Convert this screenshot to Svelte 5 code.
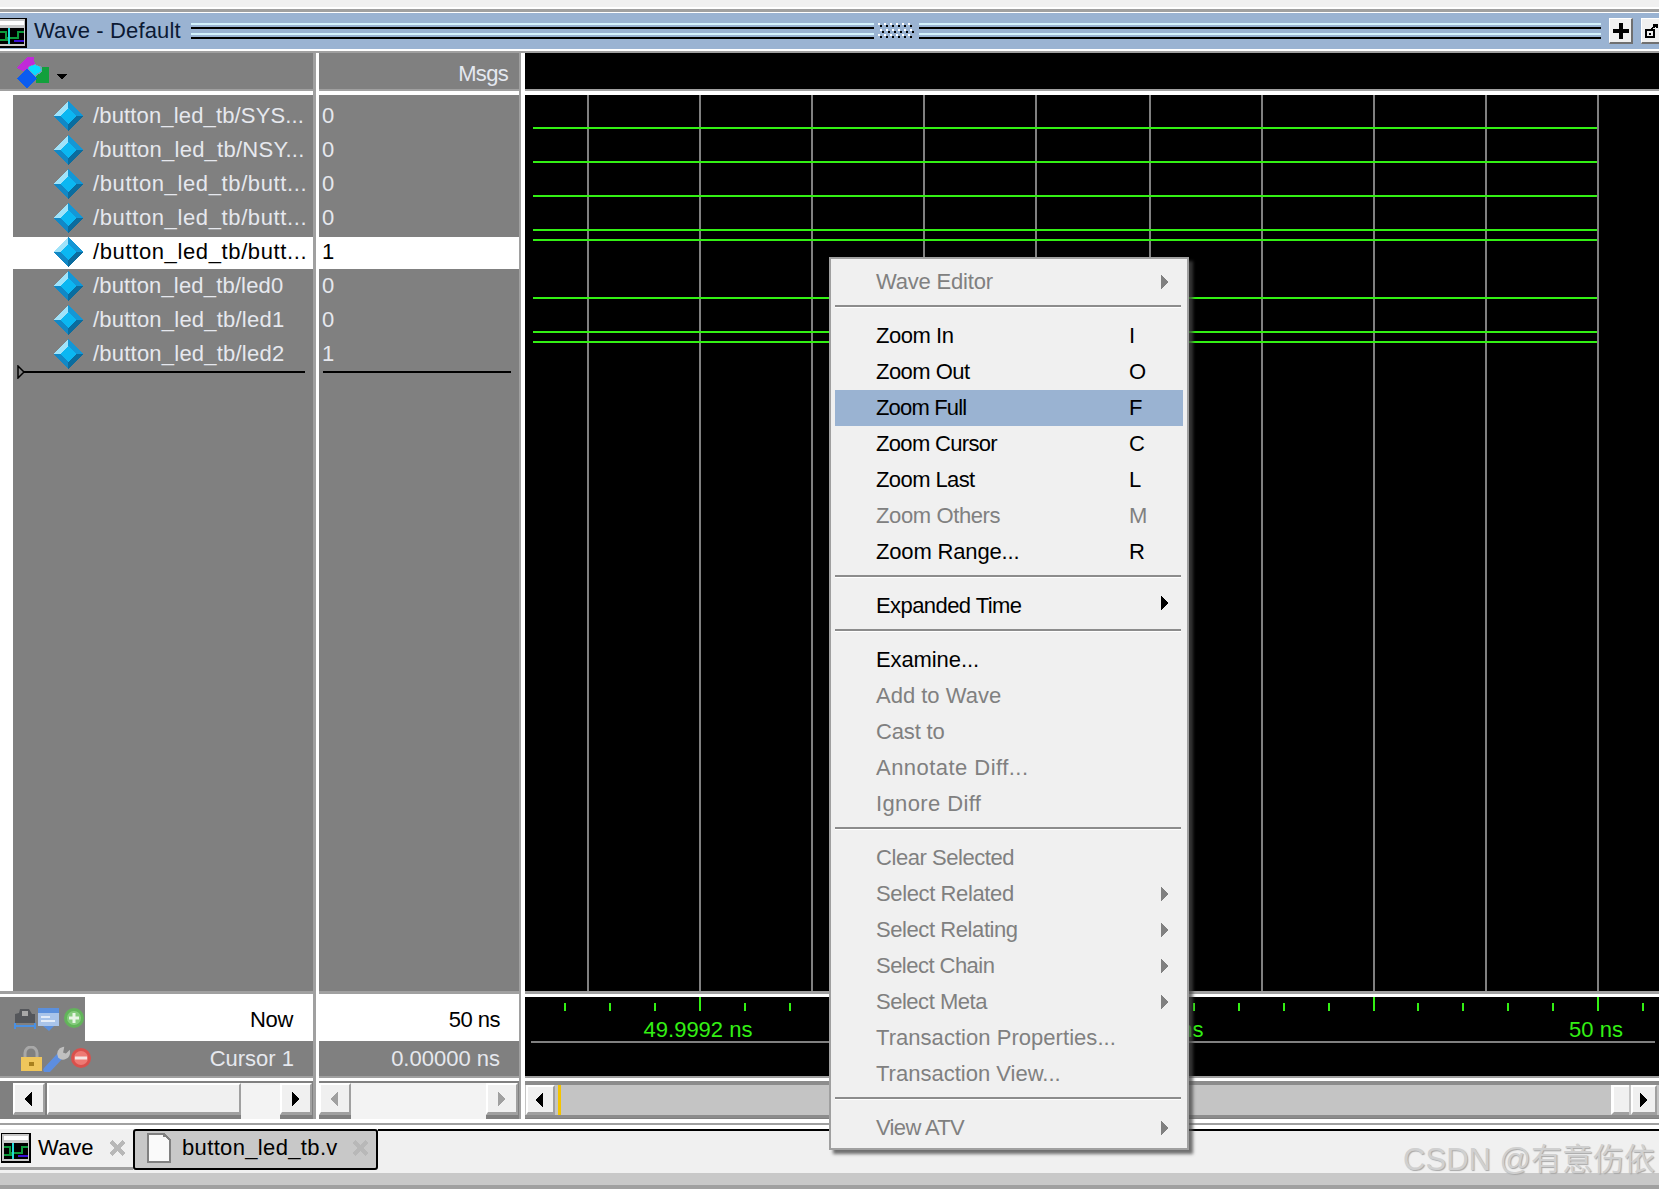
<script>
	const signals = [
		{ name: '/button_led_tb/SYS...', value: '0', ls: 0.15 },
		{ name: '/button_led_tb/NSY...', value: '0', ls: 0.25 },
		{ name: '/button_led_tb/butt...', value: '0', ls: 0.62 },
		{ name: '/button_led_tb/butt...', value: '0', ls: 0.62 },
		{ name: '/button_led_tb/butt...', value: '1', ls: 0.62, selected: true },
		{ name: '/button_led_tb/led0', value: '0', ls: 0.17 },
		{ name: '/button_led_tb/led1', value: '0', ls: 0.22 },
		{ name: '/button_led_tb/led2', value: '1', ls: 0.22 }
	];

	// ls: letter spacing that brings each label to the width it has in the old Tahoma menu
	const menu = [
		{ label: 'Wave Editor', off: true, sub: true, ls: -0.19 },
		{ sep: true },
		{ label: 'Zoom In', key: 'I', ls: -0.45 },
		{ label: 'Zoom Out', key: 'O', ls: -0.53 },
		{ label: 'Zoom Full', key: 'F', hot: true, ls: -0.82 },
		{ label: 'Zoom Cursor', key: 'C', ls: -0.67 },
		{ label: 'Zoom Last', key: 'L', ls: -0.59 },
		{ label: 'Zoom Others', key: 'M', off: true, ls: -0.38 },
		{ label: 'Zoom Range...', key: 'R', ls: -0.16 },
		{ sep: true },
		{ label: 'Expanded Time', sub: true, ls: -0.57 },
		{ sep: true },
		{ label: 'Examine...', ls: -0.1 },
		{ label: 'Add to Wave', off: true, ls: 0 },
		{ label: 'Cast to', off: true, ls: -0.15 },
		{ label: 'Annotate Diff...', off: true, ls: 0.46 },
		{ label: 'Ignore Diff', off: true, ls: 0.38 },
		{ sep: true },
		{ label: 'Clear Selected', off: true, ls: -0.45 },
		{ label: 'Select Related', off: true, sub: true, ls: -0.38 },
		{ label: 'Select Relating', off: true, sub: true, ls: -0.42 },
		{ label: 'Select Chain', off: true, sub: true, ls: -0.53 },
		{ label: 'Select Meta', off: true, sub: true, ls: -0.48 },
		{ label: 'Transaction Properties...', off: true, ls: 0.04 },
		{ label: 'Transaction View...', off: true, ls: 0 },
		{ sep: true },
		{ label: 'View ATV', off: true, sub: true, ls: -0.66 }
	];

	// page x minus the wave column's left edge
	const WAVE_X = 525;
	const gridLines = [587, 699, 811, 923, 1035, 1149, 1261, 1373, 1485, 1597].map((x) => x - WAVE_X);
	const traces = [32, 66, 100, 134, 144, 202, 236, 246];
	const ticks = Array.from({ length: 26 }, (_, i) => ({
		x: Math.round(564.3 + 44.9 * i) - WAVE_X,
		major: i % 5 === 3
	}));
	const labels = [
		{ x: 698, text: '49.9992 ns' },
		{ x: 1149, text: '49.9996 ns' },
		{ x: 1596, text: '50 ns' }
	];

	const gripDots = [];
	for (let row = 0; row < 3; row++) {
		for (let col = 0; col < 6; col++) {
			gripDots.push({ x: col * 6 + (row % 2 ? 2 : 0), y: row * 5.5 });
		}
	}
</script>

{#snippet diamond()}
	<svg class="diamond" viewBox="0 0 30 30" width="30" height="30" shape-rendering="crispEdges">
		<polygon points="15,0 30,15 15,15" fill="#1497d6" />
		<polygon points="15,0 0,15 15,15" fill="#9fe3fa" />
		<polygon points="0,15 15,30 15,15" fill="#1188c6" />
		<polygon points="30,15 15,30 15,15" fill="#0b6c9e" />
		<polygon points="15,7 23,15 15,23 7,15" fill="#0bb7f2" />
	</svg>
{/snippet}

{#snippet waveIcon()}
	<svg class="wave-icon" viewBox="0 0 30 30" width="30" height="30" shape-rendering="crispEdges">
		<rect width="30" height="30" fill="#000" />
		<rect x="1" y="1" width="27" height="27" fill="#c8c8c8" />
		<rect x="3" y="3" width="24" height="4" fill="#fff" />
		<rect x="3" y="10" width="24" height="16" fill="#000" />
		<path d="M3 14h6v6h12v-6h6M3 22h9" fill="none" stroke="#0c9a3c" stroke-width="2" />
		<rect x="11" y="10" width="2" height="16" fill="#22d8d8" />
		<rect x="17" y="22" width="10" height="2" fill="#3a10d8" />
	</svg>
{/snippet}

{#snippet closeX()}
	<svg class="tab-x" viewBox="0 0 16 16" width="16" height="16" shape-rendering="crispEdges">
		<path d="M0 3l3-3 5 5 5-5 3 3-5 5 5 5-3 3-5-5-5 5-3-3 5-5z" fill="#b8b8b8" />
	</svg>
{/snippet}

{#snippet arrow(dir, colour)}
	<svg class="arrow {dir}" viewBox="0 0 8 14" width="8" height="14" shape-rendering="crispEdges">
		<polygon points={dir === 'left' ? '8,0 8,14 0,7' : '0,0 0,14 8,7'} fill={colour} />
	</svg>
{/snippet}

<div class="window">
	<div class="top-band"></div>

	<header class="titlebar">
		<span class="title-icon">{@render waveIcon()}</span>
		<span class="title-text">Wave - Default</span>
		<span class="lines"></span>
		<svg class="grip" viewBox="0 0 38 17" width="38" height="17" shape-rendering="crispEdges">
			{#each gripDots as d}
				<rect x={d.x} y={d.y} width="2" height="2" fill="#fff" />
				<rect x={d.x + 2} y={d.y + 2} width="2" height="2" fill="#000" />
			{/each}
		</svg>
		<span class="lines"></span>
		<button class="tool-btn plus" type="button" aria-label="Add">
			<svg viewBox="0 0 16 16" width="16" height="16" shape-rendering="crispEdges">
				<path d="M6 0h4v6h6v4h-6v6h-4v-6h-6v-4h6z" fill="#000" />
			</svg>
		</button>
		<button class="tool-btn undock" type="button" aria-label="Undock">
			<svg viewBox="0 0 16 16" width="16" height="16" shape-rendering="crispEdges">
				<path d="M1 7h9v8h-9z" fill="none" stroke="#000" stroke-width="2" />
				<path d="M6 7l7-6M9 1h5v4" fill="none" stroke="#000" stroke-width="2" />
				<rect x="4" y="10" width="3" height="3" fill="#000" />
			</svg>
		</button>
	</header>
	<div class="title-rule"></div>

	<main class="panes">
		<section class="col names">
			<div class="head">
				<svg class="layers" viewBox="0 0 32 32" width="32" height="32" shape-rendering="crispEdges">
					<polygon points="0,11 10,0 17,0 18,9 6,14" fill="#c02ad8" />
					<rect x="19" y="10" width="13" height="16" fill="#12a03c" />
					<polygon points="18,7 25,10 25,15 18,20 11,15 11,10" fill="#6fa4b8" />
					<polygon points="17,8 23,10 24,14 18,18 13,14 12,10" fill="#08dcff" />
					<polygon points="10,12 20,21 10,32 0,21" fill="#0a5cf0" />
				</svg>
				<svg class="caret" viewBox="0 0 10 6" width="10" height="6" shape-rendering="crispEdges">
					<polygon points="0,0 10,0 5,6" fill="#000" />
				</svg>
			</div>
			<div class="sep"></div>
			<div class="list-wrap">
				<div class="rows">
					{#each signals as s}
						<div class="row name-row" class:selected={s.selected}>
							{@render diamond()}
							<span class="sig" style="letter-spacing: {s.ls}px">{s.name}</span>
						</div>
					{/each}
					<div class="marker name-marker">
						<svg class="marker-tip" viewBox="0 0 8 14" width="8" height="14">
							<polygon points="1,1 7,7 1,13" fill="#808080" stroke="#000" stroke-width="1.5" />
						</svg>
					</div>
				</div>
			</div>
			<div class="sep thick"></div>
			<div class="now-row">
				<div class="icon-cell">
					<svg class="status-icons" viewBox="0 0 72 24" width="72" height="24">
						<path d="M6 2h9l3 5h3v9H1V7l4-1z" fill="#54565a" />
						<path d="M8 4h6v5H8z" fill="#a8a8a8" />
						<path d="M0 19h22" stroke="#4a90e2" stroke-width="2" />
						<path d="M1 16v6M21 16v6" stroke="#4a90e2" stroke-width="2" />
						<rect x="24" y="1" width="21" height="18" fill="#a9c4ea" />
						<rect x="24" y="1" width="21" height="5" fill="#5b8fdc" />
						<path d="M29 19h11l-5 5z" fill="#5b8fdc" />
						<path d="M27 10h9M27 14h14" stroke="#e4ecf8" stroke-width="2" />
						<circle cx="60" cy="11" r="10" fill="#62b45a" />
						<circle cx="60" cy="11" r="7" fill="#86cc7e" />
						<path d="M60 6v10M55 11h10" stroke="#e8f5e6" stroke-width="3" />
					</svg>
				</div>
				<span class="now-label">Now</span>
			</div>
			<div class="cursor-row">
				<svg class="status-icons lower" viewBox="0 0 72 26" width="72" height="26">
					<path d="M4 12V7a6 6 0 0 1 12 0v5" fill="none" stroke="#a8a8a8" stroke-width="3" />
					<rect x="0" y="11" width="21" height="14" fill="#efc65c" />
					<rect x="8" y="16" width="5" height="4" fill="#a8801e" />
					<path d="M26 24l13-14" stroke="#5d8ee0" stroke-width="7" stroke-linecap="round" />
					<path d="M38 11a6 6 0 0 1 4-9l-1 5 4 2 3-3a6 6 0 0 1-10 5z" fill="#c0c0c0" stroke="#c0c0c0" stroke-width="2" />
					<circle cx="60" cy="12" r="10" fill="#d9504c" />
					<circle cx="60" cy="12" r="7" fill="#ee7a74" />
					<path d="M54 12h12" stroke="#f6e4e2" stroke-width="3" />
				</svg>
				<span class="cursor-label">Cursor 1</span>
			</div>
			<div class="sep"></div>
			<div class="scroll dark">
				<button class="sb-btn" type="button" aria-label="Left">{@render arrow('left', '#000')}</button>
				<div class="thumb" style="width: 194px"></div>
				<div class="trough"></div>
				<button class="sb-btn" type="button" aria-label="Right">{@render arrow('right', '#000')}</button>
			</div>
		</section>

		<div class="splitter first"></div>

		<section class="col values">
			<div class="head msgs">Msgs</div>
			<div class="sep"></div>
			<div class="rows">
				{#each signals as s}
					<div class="row value-row" class:selected={s.selected}>{s.value}</div>
				{/each}
				<div class="marker value-marker"></div>
			</div>
			<div class="sep thick"></div>
			<div class="now-row time">50 ns</div>
			<div class="cursor-row time">0.00000 ns</div>
			<div class="sep"></div>
			<div class="scroll dark">
				<button class="sb-btn" type="button" aria-label="Left">{@render arrow('left', '#a0a0a0')}</button>
				<div class="trough"></div>
				<button class="sb-btn" type="button" aria-label="Right">{@render arrow('right', '#a0a0a0')}</button>
			</div>
		</section>

		<div class="splitter"></div>

		<section class="col waves">
			<div class="head black"></div>
			<div class="sep"></div>
			<svg class="canvas" width="1134" height="896" shape-rendering="crispEdges">
				{#each gridLines as x}
					<rect {x} y="0" width="2" height="896" fill="#808080" />
				{/each}
				{#each traces as y}
					<rect x="8" {y} width="1064" height="2" fill="#33f014" />
				{/each}
			</svg>
			<div class="sep thick"></div>
			<svg class="ruler" width="1134" height="79">
				{#each ticks as t}
					<rect x={t.x} y={t.major ? 0 : 6} width="2" height={t.major ? 14 : 8} fill="#33f014" shape-rendering="crispEdges" />
				{/each}
				{#each labels as l}
					<text x={l.x - WAVE_X} y="40" text-anchor="middle" class="ruler-label">{l.text}</text>
				{/each}
				<rect x="6" y="44" width="1124" height="2" fill="#808080" shape-rendering="crispEdges" />
			</svg>
			<div class="sep"></div>
			<div class="scroll wave-scroll">
				<button class="sb-btn" type="button" aria-label="Left">{@render arrow('left', '#000')}</button>
				<span class="zoom-mark"></span>
				<span class="spacer"></span>
				<span class="end-thumb"></span>
				<button class="sb-btn" type="button" aria-label="Right">{@render arrow('right', '#000')}</button>
			</div>
		</section>
	</main>

	<div class="strip"></div>

	<footer class="tabs">
		<div class="tab active">
			{@render waveIcon()}
			<span class="tab-text">Wave</span>
			{@render closeX()}
		</div>
		<div class="tab file">
			<svg class="doc" viewBox="0 0 24 30" width="24" height="30" shape-rendering="crispEdges">
				<path d="M1 1h16l6 6v22H1z" fill="#fafafa" stroke="#808080" stroke-width="2" />
				<rect x="16" y="1" width="3" height="3" fill="#808080" />
			</svg>
			<span class="tab-text">button_led_tb.v</span>
			{@render closeX()}
		</div>
		<div class="tab-rest"></div>
		<span class="watermark">CSDN @有意伤依</span>
	</footer>
	<div class="foot"></div>

	<div class="menu">
		{#each menu as m}
			{#if m.sep}
				<div class="menu-sep"></div>
			{:else}
				<div class="item" class:off={m.off} class:hot={m.hot}>
					<span style="letter-spacing: {m.ls}px">{m.label}</span>
					<span>{m.key ?? ''}</span>
					{#if m.sub}
						<span class="sub" class:raised={!m.off}>{@render arrow('right', m.off ? '#808080' : '#000')}</span>
					{/if}
				</div>
			{/if}
		{/each}
	</div>
</div>

<style>
	:global(body) {
		margin: 0;
		background: #f0f0f0;
	}

	.window {
		position: relative;
		width: 1659px;
		height: 1189px;
		overflow: hidden;
		font-family: 'Liberation Sans', 'Noto Sans CJK SC', sans-serif;
		font-size: 22px;
		color: #000;
	}

	.top-band {
		height: 13px;
		background: linear-gradient(#f0f0f0 7px, #fff 7px 9px, #a0a0a0 9px 12px, #fff 12px);
	}

	.titlebar {
		display: flex;
		align-items: center;
		height: 36px;
		background: #9ab3d2;
		color: #0c1a34;
	}

	.title-icon {
		display: flex;
		margin: 4px 7px 0 -3px;
	}

	.title-text {
		width: 150px;
		margin-right: 7px;
		letter-spacing: 0.15px;
	}

	.lines {
		flex: 1;
		height: 16px;
		background: linear-gradient(#d4f2fc 2px, transparent 2px 4px, #000 4px 6px, transparent 6px 10px, #d4f2fc 10px 12px, transparent 12px 14px, #000 14px);
	}

	.grip {
		margin: 0 3px 0 4px;
	}

	.tool-btn {
		display: flex;
		align-items: center;
		justify-content: center;
		padding: 0;
		width: 24px;
		height: 26px;
		background: #f0f0f0;
		border: none;
		border-top: 1px solid #fff;
		border-left: 1px solid #fff;
		border-right: 2px solid #707070;
		border-bottom: 2px solid #707070;
		box-sizing: border-box;
	}

	.plus {
		margin-left: 8px;
	}

	.undock {
		margin-left: 8px;
		width: 18px;
		justify-content: flex-start;
		padding-left: 3px;
		border-right: none;
	}

	.title-rule {
		height: 4px;
		background: linear-gradient(#fff 2px, #a0a0a0 2px);
	}

	.panes {
		display: grid;
		grid-template-columns: 313px 6px 200px 6px 1134px;
		height: 1066px;
	}

	.splitter {
		background: linear-gradient(to right, #a0a0a0 2px, #fff 2px);
	}

	.splitter.first {
		background: linear-gradient(to right, #a0a0a0 3px, #fff 3px);
	}

	.col {
		display: grid;
		grid-template-rows: 36px 6px 896px 6px 44px 35px 5px 38px;
		min-width: 0;
		background: #808080;
	}

	.head {
		display: flex;
		align-items: center;
		background: #808080;
	}

	.head.black {
		background: #000;
	}

	.layers {
		margin: 4px 8px 0 17px;
	}

	.caret {
		margin-top: 12px;
	}

	.msgs {
		justify-content: flex-end;
		padding-right: 11px;
		padding-top: 6px;
		letter-spacing: -0.7px;
		color: #e4e8f0;
	}

	.sep {
		background: linear-gradient(#a0a0a0 2px, #fff 2px);
	}

	.sep.thick {
		background: linear-gradient(#a0a0a0 3px, #fff 3px);
	}

	.list-wrap {
		background: #fff;
		padding-left: 13px;
		min-height: 0;
	}

	.rows {
		display: flex;
		flex-direction: column;
		gap: 2px;
		height: 100%;
		padding-top: 6px;
		box-sizing: border-box;
		background: #808080;
		color: #e6e8ee;
	}

	.row {
		display: flex;
		align-items: center;
		height: 32px;
		flex: none;
	}

	.row.selected {
		background: #fff;
		color: #000;
	}

	.name-row :global(.diamond) {
		margin: 0 10px 2px 40px;
		flex: none;
	}

	.sig {
		padding-bottom: 3px;
		white-space: nowrap;
	}

	.value-row {
		padding: 0 0 3px 3px;
		box-sizing: border-box;
	}

	.marker {
		position: relative;
		height: 2px;
		margin-top: -2px;
		background: #000;
	}

	.name-marker {
		width: 283px;
		margin-left: 9px;
	}

	.value-marker {
		width: 188px;
		margin-left: 4px;
	}

	.marker-tip {
		position: absolute;
		left: -5px;
		top: -6px;
	}

	.now-row {
		display: flex;
		justify-content: flex-end;
		align-items: center;
		padding-top: 2px;
		box-sizing: border-box;
		background: #fff;
	}

	.now-row.time,
	.cursor-row.time {
		padding-right: 19px;
	}

	.icon-cell {
		display: flex;
		align-items: center;
		width: 85px;
		height: 44px;
		margin-top: -2px;
		background: #808080;
		margin-right: auto;
		flex: none;
	}

	.status-icons {
		margin-left: 14px;
		flex: none;
		filter: blur(0.5px);
	}

	.status-icons.lower {
		margin-left: 21px;
		margin-right: auto;
	}

	.now-label {
		padding-right: 20px;
		letter-spacing: -0.3px;
	}

	.now-row.time {
		letter-spacing: -0.5px;
	}

	.cursor-row {
		display: flex;
		justify-content: flex-end;
		align-items: center;
		padding-top: 1px;
		box-sizing: border-box;
		color: #e6e8ee;
	}

	.cursor-label {
		padding-right: 19px;
	}

	.scroll {
		display: flex;
		align-items: flex-start;
		box-sizing: border-box;
	}

	.scroll.dark {
		padding: 2px 1px 0 0;
	}

	.names .scroll.dark {
		padding-left: 13px;
	}

	.sb-btn {
		display: flex;
		align-items: center;
		justify-content: center;
		width: 32px;
		height: 32px;
		padding: 0;
		flex: none;
		background: #f0f0f0;
		border: none;
		border-top: 2px solid #fff;
		border-left: 2px solid #fff;
		border-right: 2px solid #a0a0a0;
		border-bottom: 3px solid #a0a0a0;
		box-sizing: border-box;
	}

	.sb-btn :global(.arrow.left) {
		margin-right: 3px;
	}

	.thumb {
		flex: none;
		height: 32px;
		margin-left: 2px;
		background: #f0f0f0;
		border-top: 2px solid #fff;
		border-left: 2px solid #fff;
		border-right: 2px solid #a0a0a0;
		border-bottom: 3px solid #a0a0a0;
		box-sizing: border-box;
	}

	.trough {
		flex: 1;
		height: 36px;
		background: #f3f3f3;
	}

	.wave-scroll {
		align-items: center;
		height: 37px;
		padding-left: 1px;
		background: #c4c4c4;
		border-top: 4px solid #8c8c8c;
		border-bottom: 3px solid #8c8c8c;
	}

	.wave-scroll .sb-btn {
		width: 29px;
		height: 30px;
	}

	.wave-scroll .sb-btn:last-child {
		width: 26px;
		margin-right: 2px;
	}

	.zoom-mark {
		width: 3px;
		height: 30px;
		margin-left: 3px;
		background: #f4c400;
	}

	.spacer {
		flex: 1;
	}

	.end-thumb {
		width: 18px;
		height: 30px;
		margin-right: 2px;
		box-sizing: border-box;
		background: #f0f0f0;
		border-left: 3px solid #fff;
		border-top: 2px solid #fff;
		border-bottom: 3px solid #a0a0a0;
	}

	.canvas,
	.ruler {
		display: block;
		background: #000;
	}

	.ruler {
		grid-row: span 2;
	}

	.ruler-label {
		font-family: 'Liberation Sans', sans-serif;
		font-size: 22px;
		fill: #33f014;
	}

	.strip {
		height: 10px;
		background: linear-gradient(#fff 4px, #a0a0a0 4px 6px, #fff 6px);
	}

	.tabs {
		position: relative;
		display: flex;
		align-items: flex-start;
		height: 44px;
		background: #f0f0f0;
	}

	.tab {
		display: flex;
		align-items: center;
		box-sizing: border-box;
		flex: none;
		padding-bottom: 3px;
	}

	.tab.active {
		width: 133px;
		height: 41px;
		padding-left: 1px;
		padding-bottom: 1px;
		border-bottom: 3px solid #a0a0a0;
	}

	.tab.file {
		width: 245px;
		height: 41px;
		padding-left: 12px;
		background: #c8c8c8;
		border: 2px solid #000;
		border-radius: 3px;
	}

	.tab-text {
		margin-left: 7px;
	}

	.tab.file .tab-text {
		margin-left: 11px;
		margin-right: 14px;
		letter-spacing: 0.35px;
	}

	.tab.active .tab-text {
		width: 71px;
	}

	.tab-x {
		flex: none;
	}

	.tab-rest {
		flex: 1;
		height: 2px;
		background: #000;
	}

	.watermark {
		position: absolute;
		right: 4px;
		top: 5px;
		font-size: 31px;
		white-space: nowrap;
		color: #d0d0d0;
		text-shadow: 1px 1px 1px #a8a8a8;
	}

	.foot {
		height: 16px;
		background: linear-gradient(#c8c8c8 12px, #a0a0a0 12px);
	}

	.menu {
		position: absolute;
		left: 829px;
		top: 257px;
		width: 360px;
		height: 893px;
		box-sizing: border-box;
		padding: 5px 4px;
		background: #f0f0f0;
		border: 2px solid #a0a0a0;
		box-shadow: 4px 4px 3px rgba(70, 70, 70, 0.75);
	}

	.item {
		display: grid;
		grid-template-columns: 253px 1fr 8px;
		align-items: center;
		height: 36px;
		padding: 0 14px 0 41px;
		box-sizing: border-box;
	}

	.item.off {
		color: #808080;
	}

	.item.hot {
		background: #9ab3d2;
	}

	.sub {
		display: flex;
		grid-column: 3;
	}

	.sub.raised {
		margin-top: -6px;
	}

	.menu-sep {
		height: 3px;
		margin: 5px 2px 10px 0;
		background: linear-gradient(#8c8c8c 2px, #fff 2px);
	}
</style>
